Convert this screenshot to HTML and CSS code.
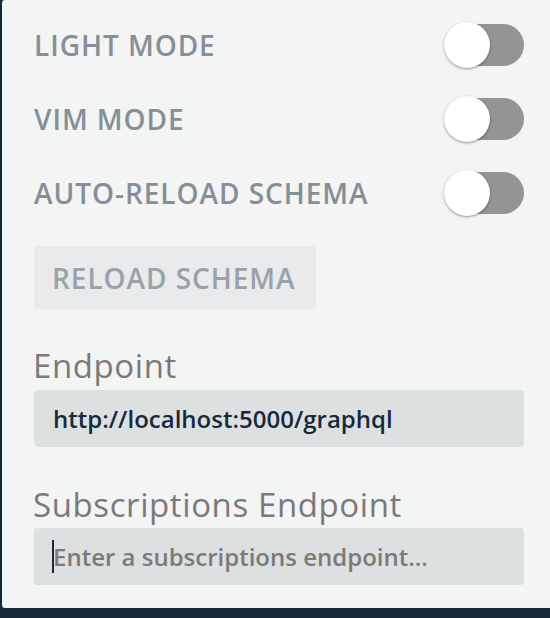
FILE: index.html
```html
<!DOCTYPE html>
<html>
<head>
<meta charset="utf-8">
<link rel="stylesheet" href="styles.css">
</head>
<body>
<div class="panel">
  <div class="row">
    <span class="row-label">Light mode</span>
    <span class="toggle"><span class="knob"></span></span>
  </div>
  <div class="row">
    <span class="row-label">Vim mode</span>
    <span class="toggle"><span class="knob"></span></span>
  </div>
  <div class="row">
    <span class="row-label">Auto-reload schema</span>
    <span class="toggle"><span class="knob"></span></span>
  </div>
  <div class="btn-wrap">
    <button class="btn">Reload schema</button>
  </div>
  <div class="field-label">Endpoint</div>
  <div class="field">
    <input class="input" type="text" value="http://localhost:5000/graphql">
  </div>
  <div class="field-label sub">Subscriptions Endpoint</div>
  <div class="field">
    <input class="input" type="text" placeholder="Enter a subscriptions endpoint...">
    <span class="caret"></span>
  </div>
</div>
</body>
</html>
```

FILE: styles.css
```css
* { box-sizing: border-box; }
html, body { margin: 0; padding: 0; }
body {
  background: #172a3a;
  width: 550px;
  height: 618px;
  overflow: hidden;
  font-family: "Open Sans", "Noto Sans", sans-serif;
}
.panel {
  margin-left: 2px;
  height: 608px;
  background: #f3f4f4;
  border-radius: 3px 0 0 3px;
  padding: 22px 26px 22px 32px;
  display: flex;
  flex-direction: column;
}
.row {
  height: 46px;
  display: flex;
  align-items: center;
  justify-content: space-between;
  margin-bottom: 28px;
}
.row:nth-child(3) { margin-bottom: 30px; }
.row-label {
  font-size: 28px;
  font-weight: 600;
  letter-spacing: 0.95px;
  text-transform: uppercase;
  color: #858f97;
  line-height: 46px;
}
.toggle {
  position: relative;
  width: 78px;
  height: 42px;
  border-radius: 21px;
  background: #949494;
}
.knob {
  position: absolute;
  left: -2px;
  top: -2px;
  width: 46px;
  height: 46px;
  border-radius: 50%;
  background: #ffffff;
  box-shadow: 0 1px 3px rgba(0,0,0,0.3), 0 1px 1px rgba(0,0,0,0.12);
}
.btn-wrap { display: flex; }
.btn {
  height: 63px;
  padding: 0 18px;
  width: 282px;
  border: 0;
  border-radius: 4px;
  background: #e8eaeb;
  color: #99a2a9;
  font-family: "Open Sans", "Noto Sans", sans-serif;
  font-size: 28px;
  font-weight: 600;
  letter-spacing: 0.95px;
  text-transform: uppercase;
  text-align: left;
  white-space: nowrap;
}
.field-label {
  margin-top: 35px;
  font-size: 33px;
  font-weight: 400;
  line-height: 44px;
  letter-spacing: 0.6px;
  color: #7a7a7a;
  margin-bottom: 2px;
  margin-left: -1px;
}
.field-label.sub { margin-top: 36px; margin-bottom: 1px; }
.field { position: relative; }
.input {
  display: block;
  width: 100%;
  height: 57px;
  border: 0;
  border-radius: 4px;
  background: #dde0e1;
  padding: 0 19px;
  font-family: "Open Sans", "Noto Sans", sans-serif;
  font-size: 24px;
  font-weight: 600;
  color: #172a3a;
  outline: none;
}
.input::placeholder { color: #7a7a7a; opacity: 1; }
.caret {
  position: absolute;
  left: 18px;
  top: 12px;
  width: 2px;
  height: 33px;
  background: #172a3a;
}
```
